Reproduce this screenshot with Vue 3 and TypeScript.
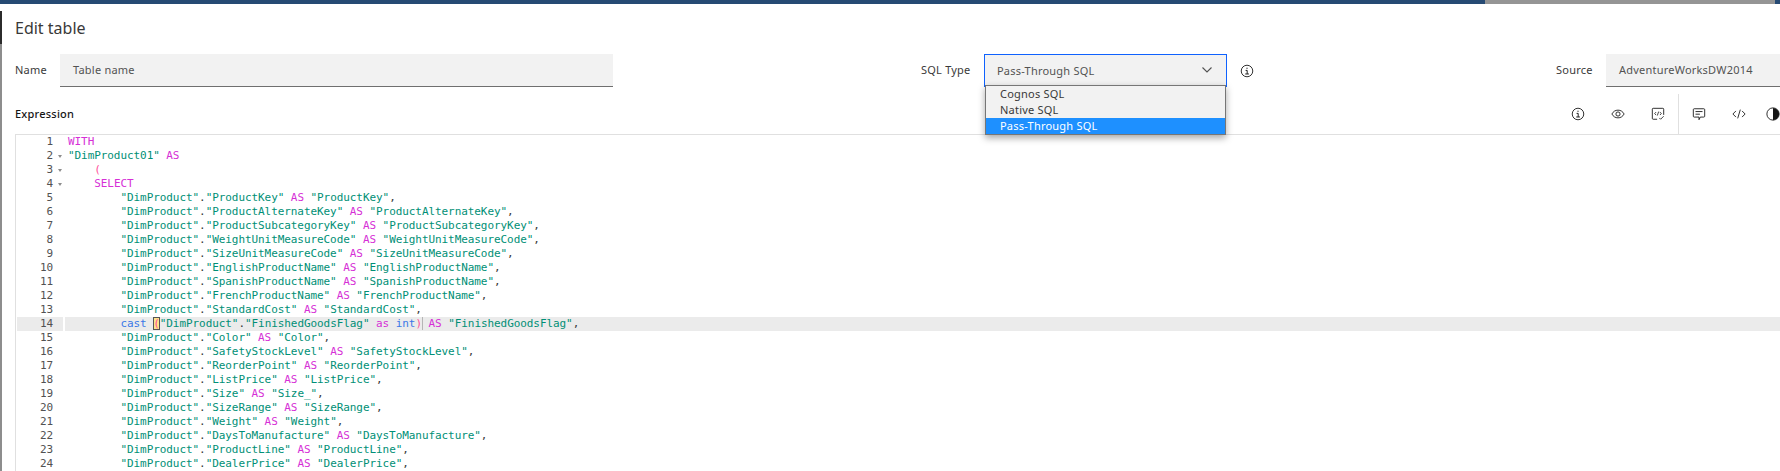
<script setup lang="ts">
type Tok = { t: string; c: string }
const q = (s: string): Tok => ({ t: s, c: 'str' })
const k = (s: string): Tok => ({ t: s, c: 'kw' })
const p = (s: string): Tok => ({ t: s, c: 'pl' })
const col = (a: string, b = a): Tok[] => [
  p('        '), q('"DimProduct"'), p('.'), q(`"${a}"`), p(' '), k('AS'), p(' '), q(`"${b}"`), p(',')
]
const names = ['ProductKey','ProductAlternateKey','ProductSubcategoryKey','WeightUnitMeasureCode','SizeUnitMeasureCode','EnglishProductName','SpanishProductName','FrenchProductName','StandardCost']
const rest: [string, string?][] = [['Color'],['SafetyStockLevel'],['ReorderPoint'],['ListPrice'],['Size','Size_'],['SizeRange'],['Weight'],['DaysToManufacture'],['ProductLine'],['DealerPrice']]
const castLine: Tok[] = [
  p('        '), { t: 'cast', c: 'fn' }, p(' '), { t: '(', c: 'paren br' },
  q('"DimProduct"'), p('.'), q('"FinishedGoodsFlag"'), p(' '), k('as'), p(' '),
  { t: 'int', c: 'fn' }, { t: ')', c: 'paren br2' }, p(' '), k('AS'), p(' '), q('"FinishedGoodsFlag"'), p(',')
]
const lines: { toks: Tok[]; fold?: boolean; active?: boolean }[] = [
  { toks: [k('WITH')] },
  { toks: [q('"DimProduct01"'), p(' '), k('AS')], fold: true },
  { toks: [p('    '), { t: '(', c: 'paren' }], fold: true },
  { toks: [p('    '), k('SELECT')], fold: true },
  ...names.map((n) => ({ toks: col(n) })),
  { toks: castLine, active: true },
  ...rest.map(([a, b]) => ({ toks: col(a, b) }))
]
</script>

<template>
  <div class="page">
    <div class="topbar"><div class="bar-grey"></div><div class="bar-end"></div></div>
    <div class="shell">
      <div class="edge"></div>
      <main class="panel">
        <h1 class="title">Edit table</h1>
        <div class="fields">
          <div class="field name-field">
            <label>Name</label>
            <div class="input name-input">Table name</div>
          </div>
          <div class="field sql-field">
            <label>SQL Type</label>
            <div class="select-wrap">
              <div class="select">
                <span>Pass-Through SQL</span>
                <svg viewBox="0 0 16 16" width="16" height="16"><path d="M3.500 5.500 8 10l4.500-4.500" fill="none" stroke="#525252" stroke-width="1.100"/></svg>
              </div>
              <ul class="menu">
                <li>Cognos SQL</li>
                <li>Native SQL</li>
                <li class="sel">Pass-Through SQL</li>
              </ul>
            </div>
            <svg class="sql-info" viewBox="0 0 16 16" width="14" height="14"><circle cx="8" cy="8" r="6.600" fill="none" stroke="#161616"/><path d="M8 4.200v1.400M6.400 7.300H8.200v4M6 11.400h4.200" fill="none" stroke="#161616" stroke-width="1.100"/></svg>
          </div>
          <div class="field source-field">
            <label>Source</label>
            <div class="input source-input">AdventureWorksDW2014</div>
          </div>
        </div>
        <div class="expr-head">
          <span class="expr-label">Expression</span>
          <div class="tools">
            <div class="tool"><svg viewBox="0 0 16 16" width="14" height="14"><circle cx="8" cy="8" r="6.600" fill="none" stroke="#161616"/><path d="M8 4.200v1.400M6.400 7.300H8.200v4M6 11.400h4.200" fill="none" stroke="#161616" stroke-width="1.100"/></svg></div>
            <div class="tool"><svg viewBox="0 0 16 16" width="14" height="14"><path d="M1 8c1.700-3 4-4.400 7-4.400S13.300 5 15 8c-1.700 3-4 4.400-7 4.400S2.700 11 1 8z" fill="none" stroke="#161616"/><circle cx="8" cy="8" r="2.400" fill="none" stroke="#161616"/></svg></div>
            <div class="tool"><svg viewBox="0 0 16 16" width="14" height="14"><path d="M7 14H2.500a1 1 0 0 1-1-1V2.500a1 1 0 0 1 1-1h11a1 1 0 0 1 1 1V9" fill="none" stroke="#161616"/><path d="M5.800 5.800 4.200 7.500l1.600 1.700M10.200 5.800l1.600 1.700-1.600 1.700M8.800 5.200 7.200 9.800M9.500 12.500l1.500 1.500 3.500-3.500" fill="none" stroke="#161616" stroke-width=".9"/></svg></div>
            <span class="tool-sep"></span>
            <div class="tool"><svg viewBox="0 0 16 16" width="14" height="14"><path d="M2.500 2h11a1 1 0 0 1 1 1v7.500a1 1 0 0 1-1 1H9.500L8 14.500v-3H2.500a1 1 0 0 1-1-1V3a1 1 0 0 1 1-1z" fill="none" stroke="#161616"/><path d="M4 5.200h8M4 8.200h5" fill="none" stroke="#161616"/></svg></div>
            <div class="tool"><svg viewBox="0 0 16 16" width="14" height="14"><path d="M4.500 4.500 1 8l3.500 3.500M11.500 4.500 15 8l-3.500 3.500M9.500 3 6.500 13" fill="none" stroke="#161616"/></svg></div>
            <div class="tool last"><svg viewBox="0 0 16 16" width="14" height="14"><circle cx="8" cy="8" r="7" fill="none" stroke="#161616"/><path d="M8 1a7 7 0 0 1 0 14z" fill="#161616"/></svg></div>
          </div>
        </div>
        <div class="editor">
          <div v-for="(l, i) in lines" :key="i" class="line" :class="{ active: l.active }">
            <div class="gutter"><span class="num">{{ i + 1 }}</span><span class="fold"><i v-if="l.fold"></i></span></div>
            <div class="code"><span v-for="(t, j) in l.toks" :key="j" :class="t.c">{{ t.t }}</span></div>
          </div>
        </div>
      </main>
    </div>
  </div>
</template>

<style>
html, body { margin: 0; padding: 0; background: #fff; overflow: hidden; }
</style>

<style scoped>
.page { width: 1780px; height: 471px; overflow: hidden; display: flex; flex-direction: column; font-family: "Noto Sans", "Liberation Sans", sans-serif; color: #161616; background: #fff; }
.topbar { height: 4px; flex: none; background: #264a73; display: flex; justify-content: flex-end; }
.bar-grey { width: 290px; background: #959595; }
.bar-end { width: 5px; background: #264a73; }
.shell { flex: 1; display: flex; min-height: 0; }
.edge { width: 2px; flex: none; background: linear-gradient(#fff 0 7px, #2b2b2b 7px 40px, #8d8d8d 40px); }
.panel { flex: 1; min-width: 0; padding-left: 13px; display: flex; flex-direction: column; }
.title { margin: 0; font-size: 16px; font-weight: 400; line-height: 22px; padding-top: 13px; color: #393939; }
.fields { display: flex; margin-top: 15px; height: 34px; flex: none; font-size: 11px; letter-spacing: .22px; }
.field { display: flex; align-items: center; height: 33px; }
.field label { color: #393939; margin-bottom: 2px; }
.input { box-sizing: border-box; height: 33px; line-height: 31px; background: #f2f2f2; border-bottom: 1px solid #6f6f6f; color: #525252; padding-left: 13px; }
.name-field label { width: 45px; }
.name-input { width: 553px; }
.sql-field { margin-left: 308px; }
.sql-field label { width: 63px; }
.select-wrap { position: relative; width: 243px; height: 33px; }
.select { box-sizing: border-box; height: 33px; border: 1px solid #0f62fe; background: #f2f2f2; color: #525252; display: flex; align-items: center; justify-content: space-between; padding: 0 11px 1px 12px; }
.menu { position: absolute; z-index: 2; top: 31px; left: 1px; width: 241px; box-sizing: border-box; margin: 0; padding: 0; list-style: none; background: #f2f2f2; border: 1px solid #767676; box-shadow: 0 3px 7px rgba(0,0,0,.35); }
.menu li { height: 16px; line-height: 16px; padding-left: 14px; color: #393939; }
.menu li.sel { background: #1e90ff; color: #fff; }
.sql-info { margin-left: 13px; }
.source-field { margin-left: 302px; }
.source-field label { width: 50px; }
.source-input { width: 175px; flex: none; }
.expr-head { display: flex; align-items: center; justify-content: space-between; height: 40px; margin-top: 6px; flex: none; }
.expr-label { font-size: 11px; font-weight: 500; letter-spacing: .22px; color: #161616; margin-bottom: 2px; }
.tools { display: flex; align-items: center; height: 40px; }
.tool { width: 40px; height: 40px; display: flex; align-items: center; justify-content: center; }
.tool.last { width: 21px; justify-content: flex-end; }
.tool-sep { width: 1px; height: 40px; background: #e0e0e0; }
.editor { flex: 1; min-height: 0; overflow: hidden; border-top: 1px solid #e0e0e0; border-left: 1px solid #e0e0e0; font-family: "DejaVu Sans Mono", "Liberation Mono", monospace; font-size: 11px; letter-spacing: -.07px; line-height: 14px; }
.line { display: flex; height: 14px; }
.gutter { flex: none; width: 46px; margin-left: 1px; margin-right: 2px; display: flex; color: #525252; }
.num { width: 36px; text-align: right; }
.fold { width: 10px; position: relative; }
.fold i { position: absolute; left: 5px; top: 6px; border-left: 2px solid transparent; border-right: 2px solid transparent; border-top: 3px solid #8d8d8d; }
.code { flex: 1; padding-left: 3px; white-space: pre; }
.active .gutter, .active .code { background: #ebebeb; }
.pl { color: #393939; }
.kw { color: #d62fd6; }
.str { color: #008f76; }
.fn { color: #3b78e7; }
.paren { color: #ff4f9a; }
.br { box-shadow: inset 0 0 0 1px #555; background: #ffe28a; }
.br2 { border-right: 1px solid #b5b5b5; margin-right: -1px; }
</style>
